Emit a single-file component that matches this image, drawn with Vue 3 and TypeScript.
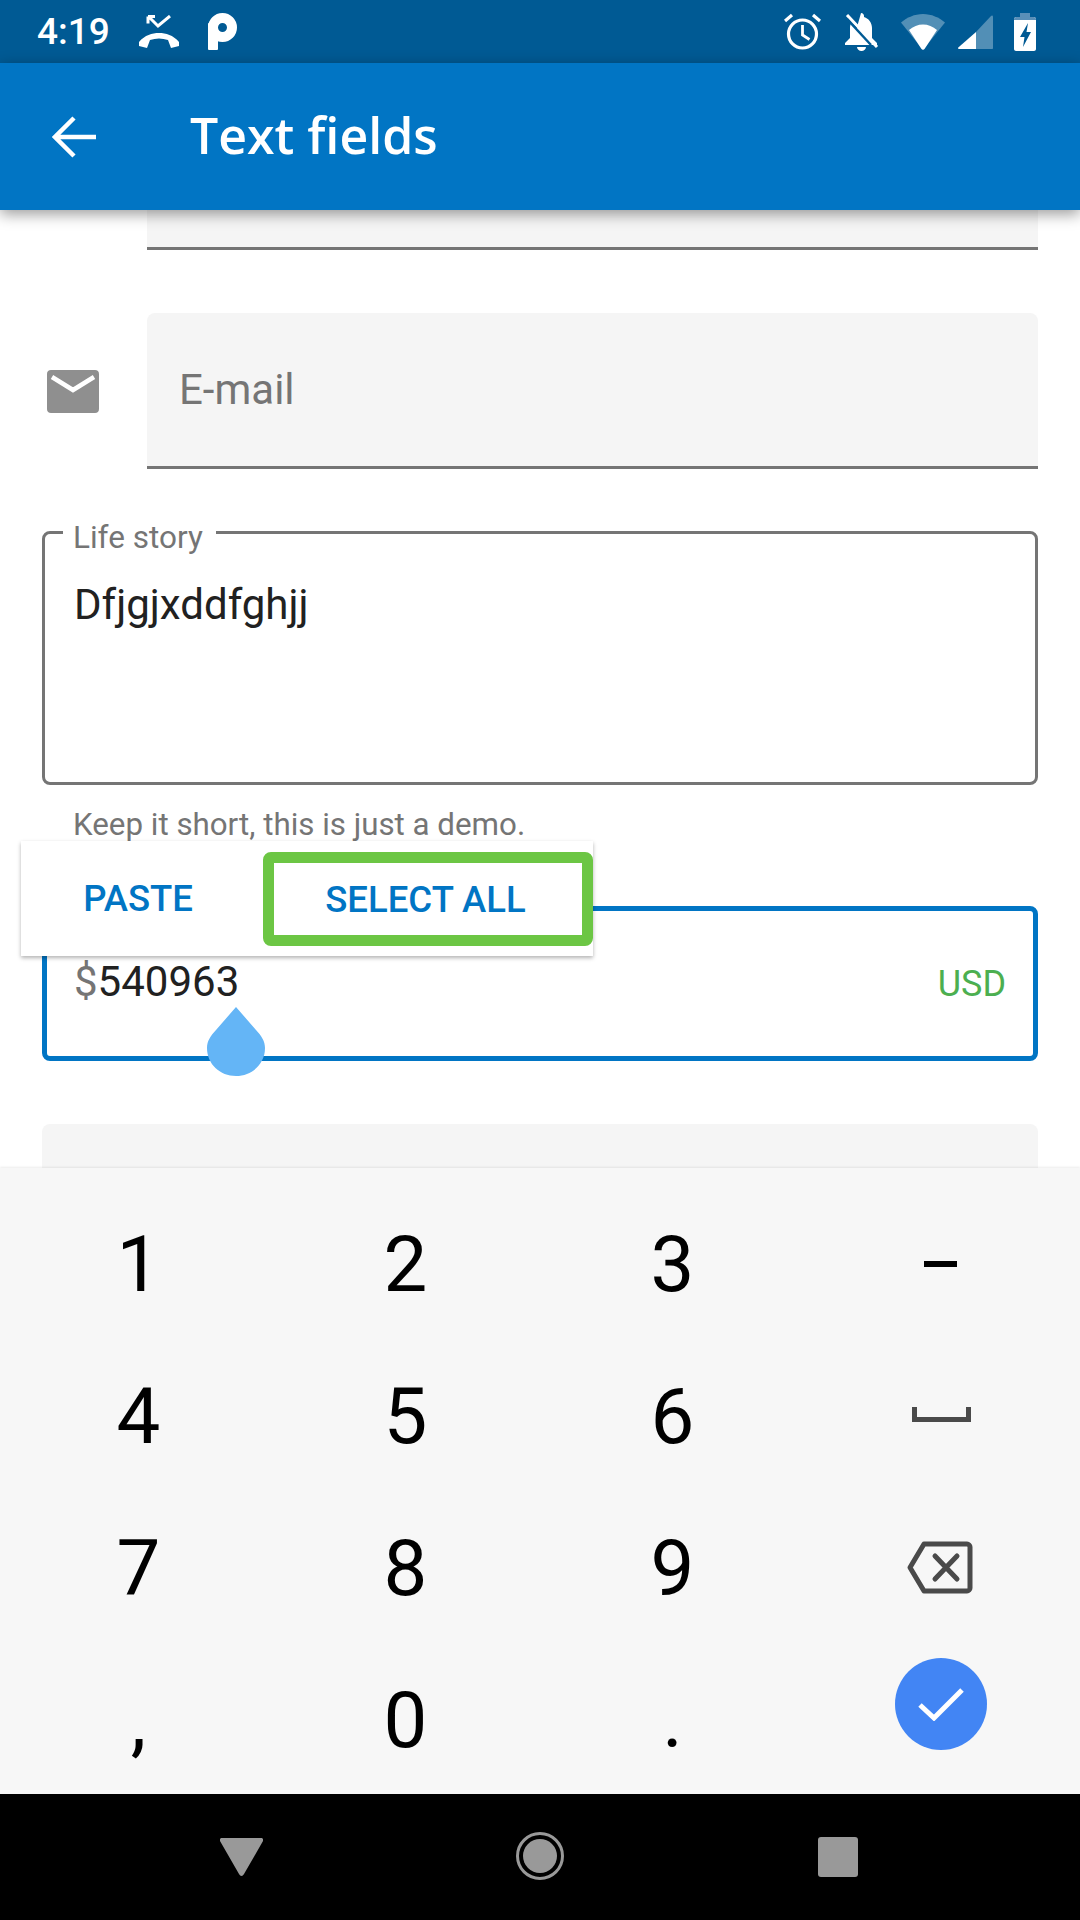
<template>
  <div class="phone">
    <div class="status-bar">
      <span class="clock">4:19</span>
      <svg class="ic-missed" viewBox="0 0 40 33"><path d="M0 27C6 20 13 18 20 18s14 2 20 9v4l-8 2-3-8c-6-2-12-2-18 0l-3 8-8-2z" fill="#fff"/><path d="M10 2l9 9L31 1M9 1.500v7M9 1.500h7" fill="none" stroke="#fff" stroke-width="3"/></svg>
      <svg class="ic-park" viewBox="0 0 29 37"><circle cx="14.500" cy="14.500" r="9.500" fill="none" stroke="#fff" stroke-width="10"/><rect x="0" y="10" width="10" height="27" rx="1" fill="#fff"/></svg>
      <div class="status-right">
        <svg class="ic-alarm" viewBox="0 0 37 37"><circle cx="18.500" cy="21" r="14" fill="none" stroke="#fff" stroke-width="3.200"/><path d="M18.500 12v10l7 4.500" fill="none" stroke="#fff" stroke-width="2.800"/><path d="M1 8l7-6M36 8l-7-6" stroke="#fff" stroke-width="3.200"/></svg>
        <svg class="ic-bell" viewBox="0 0 35 39"><path d="M17 1c2 0 3 1.500 3 3v1c5 1.500 8 6 8 11v10l5 5v2H1v-2l5-5V16c0-2 .5-4 1.500-5.500L25 33H8zM13 35h9c0 2-2 4-4.500 4S13 37 13 35z" fill="#fff"/><path d="M3 3l30 32" stroke="#fff" stroke-width="3"/><path d="M3 7l24 26" stroke="#005a94" stroke-width="2.500"/></svg>
        <svg class="ic-wifi" viewBox="0 0 44 36"><path d="M0 8.500C6 3.500 13.500 0 22 0s16 3.500 22 8.500L22 36z" fill="#fff" opacity=".32"/><path d="M8 16c4-3.500 9-5.500 14-5.500s10 2 14 5.500L23.500 35c-.8 1-2.200 1-3 0z" fill="#fff"/></svg>
        <svg class="ic-signal" viewBox="0 0 35 34"><path d="M18 17L33 1c1-1 2-.5 2 1v31c0 .6-.4 1-1 1H18z" fill="#fff" opacity=".32"/><path d="M18 17v17H1c-1 0-1.300-.8-.7-1.500z" fill="#fff"/></svg>
        <svg class="ic-batt" viewBox="0 0 22 38"><path d="M6 0h10v4h4c1 0 2 1 2 2v30c0 1-1 2-2 2H2c-1 0-2-1-2-2V6c0-1 1-2 2-2h4z" fill="#fff"/><path d="M6 0h10v4h4c1 0 2 1 2 2v1H0V6c0-1 1-2 2-2h4z" fill="#5a8fb8"/><path d="M14 10l-8 14h4.500l-1.500 10 8-15h-4.500z" fill="#005a94"/></svg>
      </div>
    </div>

    <header class="app-bar">
      <svg class="ic-back" viewBox="0 0 44 42"><path d="M22 2L3 21l19 19M3 21h41" fill="none" stroke="#fff" stroke-width="4.500"/></svg>
      <h1>Text fields</h1>
    </header>

    <main class="fields">
      <div class="filled stub"></div>

      <div class="row">
        <svg class="ic-mail" viewBox="0 0 52 43"><path d="M4 0h44c2.500 0 4 1.500 4 4v35c0 2.500-1.500 4-4 4H4c-2.500 0-4-1.500-4-4V4c0-2.500 1.500-4 4-4z" fill="#8f8f8f"/><path d="M5 7l21 13 21-13" fill="none" stroke="#fff" stroke-width="4.500"/></svg>
        <div class="filled email">E-mail</div>
      </div>

      <div class="outlined story">
        <span class="notch">Life story</span>
        <span class="value">Dfjgjxddfghjj</span>
      </div>
      <div class="helper">Keep it short, this is just a demo.</div>

      <div class="outlined salary">
        <span class="prefix">$</span><span class="value">540963</span>
        <span class="usd">USD</span>
      </div>

      <div class="filled last"></div>

      <div class="popup">
        <span class="action paste">PASTE</span>
        <span class="action select">SELECT ALL</span>
      </div>
      <svg class="handle" viewBox="0 0 58 69"><path d="M29 0l20 23c5.500 6 9 11 9 18 0 16-13 28-29 28S0 57 0 41c0-7 3.500-12 9-18z" fill="#64b5f6"/></svg>
    </main>

    <section class="keyboard">
      <div v-for="(k, i) in keys" :key="i" class="key">{{ k }}</div>
    </section>
    <svg class="kb-minus" viewBox="0 0 33 6"><rect width="33" height="6" fill="#000"/></svg>
    <svg class="kb-space" viewBox="0 0 59 15"><path d="M2.500 0v12.500h54V0" fill="none" stroke="#4a4a4a" stroke-width="5"/></svg>
    <svg class="kb-back" viewBox="0 0 66 53"><path d="M17 3h43c1.500 0 3 1.500 3 3v41c0 1.500-1.500 3-3 3H17L3 26.500z" fill="none" stroke="#4a4a4a" stroke-width="5" stroke-linejoin="round"/><path d="M28 15l22 23M50 15L28 38" stroke="#4a4a4a" stroke-width="5" stroke-linecap="round"/></svg>
    <div class="kb-done">
      <svg viewBox="0 0 46 34"><path d="M2 18l14 13L44 3" fill="none" stroke="#fff" stroke-width="5"/></svg>
    </div>

    <nav class="nav-bar">
      <svg class="nav-back" viewBox="0 0 43 38"><path d="M2 0h39c2 0 2.500 1.500 2 3L24 36c-1.300 2.500-3.700 2.500-5 0L0 3c-.5-1.500 0-3 2-3z" fill="#999"/></svg>
      <svg class="nav-home" viewBox="0 0 48 48"><circle cx="24" cy="24" r="22.500" fill="none" stroke="#999" stroke-width="3"/><circle cx="24" cy="24" r="17" fill="#999"/></svg>
      <div class="nav-recent"></div>
    </nav>
  </div>
</template>

<script setup lang="ts">
const keys: string[] = ['1', '2', '3', '', '4', '5', '6', '', '7', '8', '9', '', ',', '0', '.', '']
</script>

<style>
html, body { margin: 0; background: #fff; }
</style>

<style scoped>
.phone {
  position: relative;
  width: 1080px;
  height: 1920px;
  display: flex;
  flex-direction: column;
  overflow: hidden;
  font-family: Roboto, "Liberation Sans", sans-serif;
  background: #fff;
}

.status-bar {
  height: 63px;
  flex: none;
  display: flex;
  align-items: center;
  padding: 0 44px 0 37px;
  box-sizing: border-box;
  background: #005a94;
  color: #fff;
}
.clock { font-size: 37px; font-weight: 500; width: 102px; }
.ic-missed { width: 40px; height: 33px; }
.ic-park { width: 29px; height: 37px; margin-left: 29px; }
.status-right { margin-left: auto; display: flex; align-items: center; }
.ic-alarm { width: 37px; height: 37px; }
.ic-bell { width: 35px; height: 39px; margin-left: 23px; }
.ic-wifi { width: 44px; height: 36px; margin-left: 22px; }
.ic-signal { width: 35px; height: 34px; margin-left: 13px; }
.ic-batt { width: 22px; height: 38px; margin-left: 21px; }

.app-bar {
  position: relative;
  z-index: 2;
  height: 147px;
  flex: none;
  display: flex;
  align-items: center;
  padding-left: 52px;
  background: #0175c4;
  box-shadow: 0 4px 14px rgba(0, 0, 0, 0.4);
}
.ic-back { width: 44px; height: 42px; }
.app-bar h1 {
  margin: 0 0 3px 94px;
  color: #fff;
  font-family: "Open Sans", sans-serif;
  font-size: 50px;
  font-weight: 600;
}

.fields {
  position: relative;
  flex: 1;
  min-height: 0;
  overflow: hidden;
  padding: 0 42px 0 42px;
}
.filled {
  background: #f5f5f5;
  border-bottom: 3px solid #757575;
  border-radius: 8px 8px 0 0;
}
.stub {
  height: 37px;
  margin-left: 105px;
  border-radius: 0;
}
.row {
  display: flex;
  align-items: center;
  margin-top: 63px;
}
.ic-mail { width: 52px; height: 43px; margin: 0 48px 0 5px; flex: none; }
.email {
  flex: 1;
  height: 153px;
  display: flex;
  align-items: center;
  padding-left: 32px;
  font-size: 42px;
  color: #757575;
}
.outlined {
  position: relative;
  box-sizing: border-box;
  border-radius: 8px;
}
.story {
  height: 254px;
  margin-top: 62px;
  padding: 46px 29px 0;
  border: 3px solid #757575;
}
.notch {
  position: absolute;
  top: -13px;
  left: 18px;
  height: 24px;
  padding: 0 13px 0 10px;
  background: #fff;
  font-size: 31.500px;
  line-height: 34px;
  color: #757575;
}
.value { font-size: 42px; color: #212121; }
.helper {
  margin: 22px 0 0 31px;
  font-size: 31.300px;
  line-height: 36px;
  color: #757575;
}
.salary {
  height: 155px;
  margin-top: 63px;
  padding: 46px 27px 0 27px;
  border: 5px solid #0175c4;
  display: flex;
  align-items: baseline;
}
.prefix { font-size: 42px; color: #757575; }
.usd { margin-left: auto; font-size: 36px; color: #4caf50; }
.last { height: 120px; margin-top: 63px; border: 0; }

.popup {
  position: absolute;
  left: 21px;
  top: 631px;
  width: 572px;
  height: 115px;
  display: flex;
  background: #fff;
  box-shadow: 0 2px 4px rgba(0, 0, 0, 0.3);
}
.action {
  display: flex;
  align-items: center;
  justify-content: center;
  color: #0175c4;
  font-size: 36.500px;
  font-weight: 500;
}
.paste { width: 236px; padding-right: 2px; box-sizing: border-box; }
.select {
  position: absolute;
  left: 242px;
  top: 11px;
  width: 330px;
  height: 94px;
  box-sizing: border-box;
  padding-right: 5px;
  border: 11px solid #6cc644;
  border-radius: 8px;
}
.handle {
  position: absolute;
  left: 207px;
  top: 797px;
  width: 58px;
  height: 69px;
}

.keyboard {
  position: relative;
  z-index: 1;
  flex: none;
  box-sizing: border-box;
  height: 626px;
  padding: 20px 6px 0 5px;
  display: grid;
  grid-template-columns: repeat(4, 267px);
  grid-auto-rows: 152px;
  background: #f7f7f7;
  box-shadow: 0 -1px 2px rgba(0, 0, 0, 0.08);
}
.key {
  display: flex;
  align-items: center;
  justify-content: center;
  font-size: 78px;
  color: #000;
}
.kb-minus, .kb-space, .kb-back, .kb-done { position: absolute; z-index: 2; }
.kb-minus { left: 924px; top: 1261px; width: 33px; height: 6px; }
.kb-space { left: 912px; top: 1407px; width: 59px; height: 15px; }
.kb-back { left: 907px; top: 1541px; width: 66px; height: 53px; }
.kb-done {
  left: 895px;
  top: 1658px;
  width: 92px;
  height: 92px;
  display: flex;
  align-items: center;
  justify-content: center;
  border-radius: 50%;
  background: #4285f4;
}
.kb-done svg { width: 46px; height: 34px; }

.nav-bar {
  position: relative;
  z-index: 1;
  height: 126px;
  flex: none;
  background: #000;
}
.nav-back { position: absolute; left: 220px; top: 44px; width: 43px; height: 38px; }
.nav-home { position: absolute; left: 516px; top: 38px; width: 48px; height: 48px; }
.nav-recent {
  position: absolute;
  left: 818px;
  top: 43px;
  width: 40px;
  height: 40px;
  border-radius: 3px;
  background: #999;
}
</style>
